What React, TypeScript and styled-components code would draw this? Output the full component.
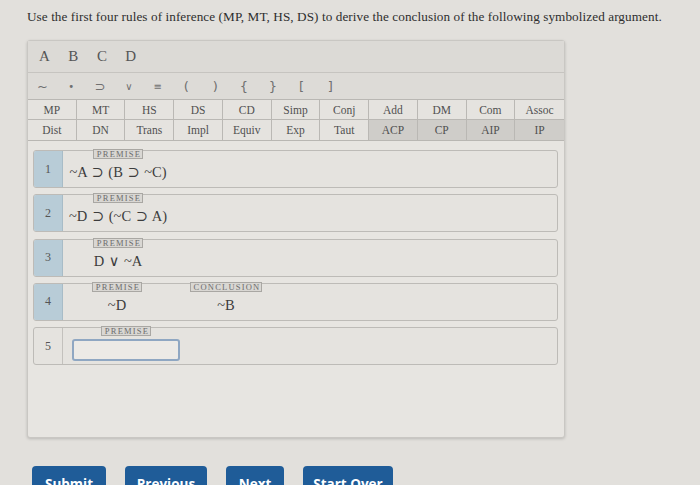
import React from "react";
import styled, { createGlobalStyle } from "styled-components";

const Global = createGlobalStyle`
  html, body { margin: 0; padding: 0; }
  body {
    width: 700px; height: 485px; overflow: hidden;
    background: #e2e0dc;
    font-family: "Liberation Serif", "DejaVu Serif", serif;
  }
`;

const Page = styled.div`
  width: 700px;
  height: 485px;
  padding: 9px 0 0 27px;
  box-sizing: border-box;
  overflow: hidden;
`;

const Instruction = styled.p`
  margin: 0;
  font-size: 13.2px;
  line-height: 16px;
  color: #2e2e2e;
  letter-spacing: 0.08px;
`;

const Panel = styled.div`
  margin-top: 15px;
  width: 538px;
  height: 398px;
  box-sizing: border-box;
  background: #e7e5e1;
  border: 1px solid #c9c7c3;
  border-radius: 3px;
  box-shadow: 0 1px 3px rgba(0, 0, 0, 0.18);
  display: flex;
  flex-direction: column;
`;

const VarBar = styled.div`
  height: 31px;
  display: flex;
  align-items: center;
  padding-left: 2px;
  background: #dcdad6;
  border-bottom: 1px solid #c6c4c0;
`;

const VarKey = styled.span`
  width: 28.8px;
  text-align: center;
  font-size: 15px;
  color: #555;
`;

const SymBar = styled.div`
  height: 26px;
  display: flex;
  align-items: center;
  background: #dddbd7;
`;

const SymKey = styled.span<{ $small?: boolean }>`
  width: 28.8px;
  text-align: center;
  font-family: "DejaVu Sans", sans-serif;
  font-size: ${(p) => (p.$small ? "10px" : "13px")};
  color: #707070;
`;

const RuleGrid = styled.div`
  display: grid;
  grid-template-columns: repeat(11, 1fr);
  grid-auto-rows: 20px;
  border-top: 1px solid #b9b7b3;
  border-bottom: 1px solid #b9b7b3;
`;

const RuleCell = styled.div<{ $dark?: boolean }>`
  display: flex;
  align-items: center;
  justify-content: center;
  font-size: 11.5px;
  color: #505050;
  background: ${(p) => (p.$dark ? "#cfcdc9" : "#e5e3df")};
  border-right: 1px solid #bab8b4;
  border-bottom: 1px solid #bab8b4;
  &:nth-child(11n) { border-right: none; }
  &:nth-child(n + 12) { border-bottom: none; }
`;

const Proof = styled.div`
  display: flex;
  flex-direction: column;
  gap: 6.3px;
  padding: 9px 6px 0 5px;
`;

const Line = styled.div`
  height: 38px;
  box-sizing: border-box;
  display: flex;
  border: 1px solid #bdbbb7;
  border-radius: 3px;
  background: #e5e3df;
`;

const LineNo = styled.div<{ $given?: boolean }>`
  width: 28px;
  flex: none;
  display: flex;
  align-items: center;
  justify-content: center;
  font-size: 12px;
  color: #555;
  background: ${(p) => (p.$given ? "#b8ccd7" : "transparent")};
  border-right: 1px solid ${(p) => (p.$given ? "#a8bcc7" : "#c3c1bd")};
  border-radius: 2px 0 0 2px;
`;

const Cells = styled.div`
  display: flex;
`;

const Cell = styled.div<{ $w?: number }>`
  width: ${(p) => p.$w ?? 110}px;
  display: flex;
  flex-direction: column;
  align-items: center;
  margin-top: -2px;
`;

const Tag = styled.span`
  font-size: 8.5px;
  line-height: 8px;
  letter-spacing: 1.2px;
  color: #6d6d6d;
  background: #d9d7d3;
  border: 1px solid #a9a7a3;
  padding: 0 1px 0 3px;
`;

const Formula = styled.span`
  margin-top: 5px;
  font-size: 14.5px;
  line-height: 16px;
  word-spacing: 1px;
  color: #3c3c3c;
  white-space: pre;
`;

const Entry = styled.div`
  margin-top: 3px;
  width: 108px;
  height: 22px;
  box-sizing: border-box;
  border: 2px solid #8fa7c2;
  border-radius: 3px;
  background: #eceae6;
`;

const Buttons = styled.div`
  display: flex;
  gap: 19px;
  margin-top: 28px;
  padding-left: 5px;
`;

const Btn = styled.button<{ $w: number }>`
  width: ${(p) => p.$w}px;
  height: 34px;
  border: none;
  border-radius: 4px;
  background: #1f5c98;
  color: #fff;
  font-family: "Open Sans", sans-serif;
  font-weight: 700;
  font-size: 13.5px;
  padding: 9px 0 0;
  display: flex;
  justify-content: center;
  align-items: flex-start;
`;

const vars = ["A", "B", "C", "D"];
const syms: { s: string; small?: boolean }[] = [
  { s: "~" },
  { s: "•", small: true },
  { s: "⊃" },
  { s: "∨", small: true },
  { s: "≡", small: true },
  { s: "(" },
  { s: ")" },
  { s: "{" },
  { s: "}" },
  { s: "[" },
  { s: "]" },
];
const rules1 = ["MP", "MT", "HS", "DS", "CD", "Simp", "Conj", "Add", "DM", "Com", "Assoc"];
const rules2 = ["Dist", "DN", "Trans", "Impl", "Equiv", "Exp", "Taut", "ACP", "CP", "AIP", "IP"];

type Item = { tag: string; f?: string; input?: boolean; w?: number };
const lines: { n: number; given: boolean; items: Item[] }[] = [
  { n: 1, given: true, items: [{ tag: "PREMISE", f: "~A ⊃ (B ⊃ ~C)" }] },
  { n: 2, given: true, items: [{ tag: "PREMISE", f: "~D ⊃ (~C ⊃ A)" }] },
  { n: 3, given: true, items: [{ tag: "PREMISE", f: "D ∨ ~A" }] },
  {
    n: 4,
    given: true,
    items: [
      { tag: "PREMISE", f: "~D", w: 108 },
      { tag: "CONCLUSION", f: "~B" },
    ],
  },
  { n: 5, given: false, items: [{ tag: "PREMISE", input: true, w: 126 }] },
];

export default function App() {
  return (
    <>
      <Global />
      <Page>
        <Instruction>
          Use the first four rules of inference (MP, MT, HS, DS) to derive the conclusion of the following symbolized argument.
        </Instruction>
        <Panel>
          <VarBar>
            {vars.map((v) => (
              <VarKey key={v}>{v}</VarKey>
            ))}
          </VarBar>
          <SymBar>
            {syms.map((s, i) => (
              <SymKey key={i} $small={s.small}>
                {s.s}
              </SymKey>
            ))}
          </SymBar>
          <RuleGrid>
            {rules1.map((r) => (
              <RuleCell key={r}>{r}</RuleCell>
            ))}
            {rules2.map((r, i) => (
              <RuleCell key={r} $dark={i >= 7}>
                {r}
              </RuleCell>
            ))}
          </RuleGrid>
          <Proof>
            {lines.map((l) => (
              <Line key={l.n}>
                <LineNo $given={l.given}>{l.n}</LineNo>
                <Cells>
                  {l.items.map((it, i) => (
                    <Cell key={i} $w={it.w}>
                      <Tag>{it.tag}</Tag>
                      {it.input ? <Entry /> : <Formula>{it.f}</Formula>}
                    </Cell>
                  ))}
                </Cells>
              </Line>
            ))}
          </Proof>
        </Panel>
        <Buttons>
          <Btn $w={74}>Submit</Btn>
          <Btn $w={82}>Previous</Btn>
          <Btn $w={58}>Next</Btn>
          <Btn $w={90}>Start Over</Btn>
        </Buttons>
      </Page>
    </>
  );
}
